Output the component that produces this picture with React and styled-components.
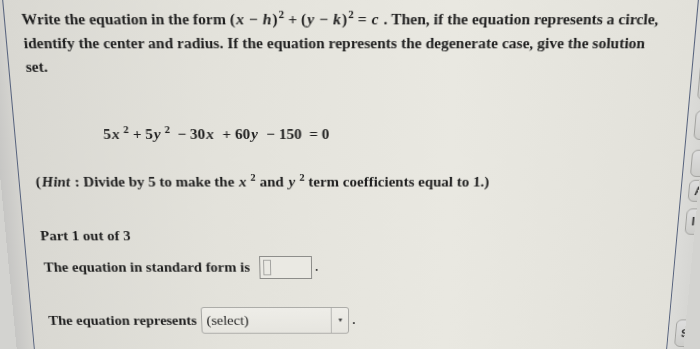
import styled, { createGlobalStyle } from "styled-components";

const GlobalStyle = createGlobalStyle`
  html, body {
    margin: 0;
    padding: 0;
    overflow: hidden;
    background: #d3d3d0;
  }
  body {
    width: 700px;
    height: 349px;
  }
`;

// the photo is taken at an angle, so the whole sheet is tilted back
const Scene = styled.div`
  width: 700px;
  height: 372px;
  display: flex;
  transform-origin: 350px 174.5px;
  transform: perspective(1000px) rotateX(-15.3deg);
  font-family: "Liberation Serif", "Times New Roman", serif;
  color: #1f1f1f;
`;

const Gutter = styled.div`
  width: 18px;
  flex: none;
  background: linear-gradient(90deg, #c6c6c4, #d4d3cf);
`;

const Panel = styled.main`
  width: 665px;
  flex: none;
  box-sizing: border-box;
  border-left: 1px solid #56627d;
  border-right: 1px solid #56627d;
  background: linear-gradient(
    90deg,
    #d9d8d2 0%,
    #e3e2db 30%,
    #e9e8e1 65%,
    #e2e1da 100%
  );
  padding: 9px 0 0 16px;
  display: flex;
  flex-direction: column;
  font-size: 15px;
  font-weight: 700;
`;

const Prompt = styled.p`
  margin: 0;
  line-height: 23px;
  white-space: nowrap;
`;

const Var = styled.i`
  font-style: italic;
  padding: 0 1px;
`;

const Sup = styled.sup`
  font-size: 0.72em;
  vertical-align: 0.6em;
  line-height: 0;
  margin-left: ${(p) => p.$gap || 1}px;
`;

const Equation = styled.div`
  margin: 44px 0 0 71px;
  line-height: 23px;
  white-space: pre;
`;

const Hint = styled.div`
  margin-top: 26px;
  line-height: 23px;
`;

const PartLabel = styled.div`
  margin-top: 34px;
  line-height: 23px;
`;

const AnswerRow = styled.div`
  display: flex;
  align-items: center;
  height: ${(p) => p.$h}px;
  margin-top: ${(p) => p.$top}px;
  padding-left: 1px;
`;

const AnswerBox = styled.span`
  display: inline-flex;
  box-sizing: border-box;
  width: 54px;
  height: 25px;
  margin-left: 10px;
  padding: 3px;
  border: 1px solid #8b8b88;
  background: #eae9e3;
`;

const Caret = styled.span`
  width: 8px;
  height: 100%;
  box-sizing: border-box;
  border: 1.5px solid #a3a3a0;
`;

const Dot = styled.span`
  margin-left: 3px;
  font-size: 12px;
`;

const Select = styled.div`
  display: flex;
  box-sizing: border-box;
  width: 154px;
  height: 30px;
  margin-left: 5px;
  border: 1px solid #a6a6a3;
  border-radius: 3px;
  background: linear-gradient(#eeede8, #e6e5df);
  font-weight: 400;
  font-size: 15px;
`;

const SelectText = styled.span`
  flex: 1;
  display: flex;
  align-items: center;
  padding-left: 4px;
`;

const SelectArrow = styled.span`
  width: 17px;
  display: flex;
  align-items: center;
  justify-content: center;
  border-left: 1px solid #b4b4b1;
  font-size: 7px;
  color: #444;
`;

const Sidebar = styled.aside`
  flex: 1;
  display: flex;
  flex-direction: column;
  padding: 50px 0 0 7px;
  overflow: hidden;
  background: linear-gradient(90deg, #dcdcd9, #d6d6d3);
`;

const Accent = styled.div`
  width: 60px;
  height: 8px;
  border-radius: 5px 5px 0 0;
  background: #e39a3c;
`;

const SideTab = styled.div`
  flex: none;
  width: 60px;
  height: ${(p) => p.$h}px;
  margin-top: ${(p) => p.$gap}px;
  box-sizing: border-box;
  padding-left: 5px;
  display: flex;
  align-items: center;
  border: 1px solid #a3a3a0;
  border-radius: 6px;
  background: linear-gradient(#dedede, #cdcdca);
  font: 700 12px "Liberation Sans", Arial, sans-serif;
  color: #333;
`;

export default function App() {
  return (
    <>
      <GlobalStyle />
      <Scene>
        <Gutter />
        <Panel>
          <Prompt>
            Write the equation in the form (<Var>x</Var> − <Var>h</Var>)
            <Sup>2</Sup> + (<Var>y</Var> − <Var>k</Var>)<Sup>2</Sup> ={" "}
            <Var>c</Var> . Then, if the equation represents a circle,
            <br />
            identify the center and radius. If the equation represents the
            degenerate case, give the solution
            <br />
            set.
          </Prompt>

          <Equation>
            5<Var>x</Var>
            <Sup $gap={3}>2</Sup> + 5<Var>y</Var>
            <Sup $gap={3}>2</Sup>  − 30<Var>x</Var>  + 60<Var>y</Var>  − 150  = 0
          </Equation>

          <Hint>
            (<Var>Hint</Var> : Divide by 5 to make the <Var>x</Var>
            <Sup $gap={3}>2</Sup> and <Var>y</Var>
            <Sup $gap={3}>2</Sup> term coefficients equal to 1.)
          </Hint>

          <PartLabel>Part 1 out of 3</PartLabel>

          <AnswerRow $h={25} $top={10}>
            The equation in standard form is
            <AnswerBox>
              <Caret />
            </AnswerBox>
            <Dot>.</Dot>
          </AnswerRow>

          <AnswerRow $h={30} $top={31}>
            The equation represents
            <Select>
              <SelectText>(select)</SelectText>
              <SelectArrow>▼</SelectArrow>
            </Select>
            <Dot>.</Dot>
          </AnswerRow>
        </Panel>
        <Sidebar>
          <Accent />
          <SideTab $h={37} $gap={4} />
          <SideTab $h={30} $gap={10} />
          <SideTab $h={28} $gap={10} />
          <SideTab $h={23} $gap={3}>
            A
          </SideTab>
          <SideTab $h={28} $gap={7}>
            I
          </SideTab>
          <SideTab $h={31} $gap={93}>
            S
          </SideTab>
        </Sidebar>
      </Scene>
    </>
  );
}
